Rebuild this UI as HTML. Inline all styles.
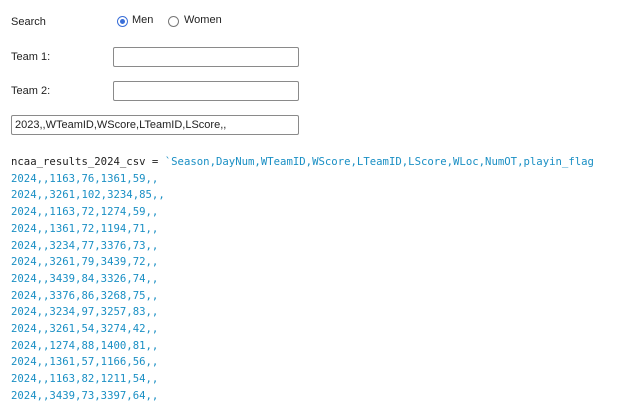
<!DOCTYPE html>
<html><head><style>
body{margin:0;width:640px;height:400px;background:#fff;overflow:hidden;font-family:"Liberation Sans",sans-serif;font-size:11px;color:#222;position:relative}
.a{position:absolute;white-space:nowrap}
.in{position:absolute;border:1px solid #8a8a8a;border-radius:2px;background:#fff;box-sizing:border-box}
.r{position:absolute;width:11px;height:11px;border:1px solid #777;border-radius:50%;box-sizing:border-box}
pre{position:absolute;left:11px;top:154px;margin:0;font-family:"DejaVu Sans Mono",monospace;font-size:10.65px;line-height:16.7px;color:#1a8fc4}
pre b{font-weight:normal;color:#222}
</style></head><body>
<div class="a" style="left:11px;top:16px">Search</div>
<div class="r" style="left:117px;top:16px;border-color:#3a6fd8"><div style="position:absolute;left:2px;top:2px;width:5px;height:5px;border-radius:50%;background:#3a6fd8"></div></div>
<div class="a" style="left:132px;top:14px">Men</div>
<div class="r" style="left:168px;top:16px"></div>
<div class="a" style="left:184px;top:14px">Women</div>
<div class="a" style="left:11px;top:51px">Team 1:</div>
<div class="in" style="left:113px;top:47px;width:186px;height:20px"></div>
<div class="a" style="left:11px;top:85px">Team 2:</div>
<div class="in" style="left:113px;top:81px;width:186px;height:20px"></div>
<div class="in" style="left:11px;top:115px;width:288px;height:20px"></div>
<div class="a" style="left:15px;top:119px">2023,,WTeamID,WScore,LTeamID,LScore,,</div>
<pre><b>ncaa_results_2024_csv = </b>`Season,DayNum,WTeamID,WScore,LTeamID,LScore,WLoc,NumOT,playin_flag
2024,,1163,76,1361,59,,
2024,,3261,102,3234,85,,
2024,,1163,72,1274,59,,
2024,,1361,72,1194,71,,
2024,,3234,77,3376,73,,
2024,,3261,79,3439,72,,
2024,,3439,84,3326,74,,
2024,,3376,86,3268,75,,
2024,,3234,97,3257,83,,
2024,,3261,54,3274,42,,
2024,,1274,88,1400,81,,
2024,,1361,57,1166,56,,
2024,,1163,82,1211,54,,
2024,,3439,73,3397,64,,</pre>
</body></html>
